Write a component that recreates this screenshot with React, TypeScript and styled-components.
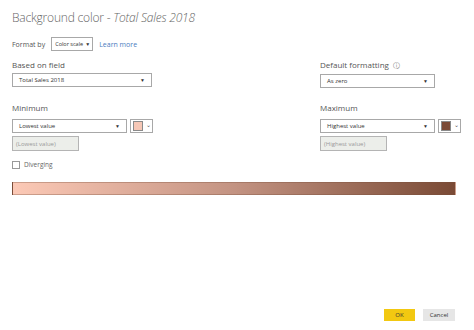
import React from 'react'
import styled, { createGlobalStyle } from 'styled-components';

const GlobalStyle = createGlobalStyle`
    html, body {
        margin: 0;
        padding: 0;
        background: #ffffff;
    }
    body {
        font-family: "Open Sans", "Noto Sans", sans-serif;
        color: #444444;
    }
`;

interface ColorPickProps {
    swatch: string;
};

const ColorPick: React.FC<ColorPickProps> = ({ swatch }) => {
    return (
        <ColorButton>
            <Swatch swatch={swatch} />
            <Caret>⌄</Caret>
        </ColorButton>
    )
};

const Dropdown: React.FC<{ label: string; width: number }> = ({ label, width }) => {
    return (
        <SelectBox style={{ width }}>
            <span>{label}</span>
            <Arrow>▼</Arrow>
        </SelectBox>
    )
};

const App: React.FC = () => {
    return (
        <>
            <GlobalStyle />
            <Dialog>
                <Title>
                    Background color - <em>Total Sales 2018</em>
                </Title>

                <FormatRow>
                    <SmallLabel>Format by</SmallLabel>
                    <FormatSelect>
                        <span>Color scale</span>
                        <Arrow>▼</Arrow>
                    </FormatSelect>
                    <LearnMore>Learn more</LearnMore>
                </FormatRow>

                <Columns top={8}>
                    <Column>
                        <SectionLabel space={2}>Based on field</SectionLabel>
                        <Dropdown label='Total Sales 2018' width={140} />
                    </Column>
                    <Column>
                        <SectionLabel space={2}>
                            Default formatting <Info>ⓘ</Info>
                        </SectionLabel>
                        <Dropdown label='As zero' width={115} />
                    </Column>
                </Columns>

                <Columns top={14}>
                    <Column>
                        <SectionLabel space={5}>Minimum</SectionLabel>
                        <PickRow>
                            <Dropdown label='Lowest value' width={115} />
                            <ColorPick swatch='#f6c7b6' />
                        </PickRow>
                        <ValueInput>(Lowest value)</ValueInput>
                        <CheckRow>
                            <CheckBox />
                            <span>Diverging</span>
                        </CheckRow>
                    </Column>
                    <Column>
                        <SectionLabel space={5}>Maximum</SectionLabel>
                        <PickRow>
                            <Dropdown label='Highest value' width={115} />
                            <ColorPick swatch='#7b4a36' />
                        </PickRow>
                        <ValueInput>(Highest value)</ValueInput>
                    </Column>
                </Columns>

                <GradientBar />

                <Footer>
                    <OkButton>OK</OkButton>
                    <CancelButton>Cancel</CancelButton>
                </Footer>
            </Dialog>
        </>
    )
};

const Dialog = styled.div`
    width: 474px;
    height: 330px;
    box-sizing: border-box;
    padding: 9px 18px 9px 12px;
    display: flex;
    flex-direction: column;
`;

const Title = styled.div`
    font-size: 12px;
    font-weight: 300;
    letter-spacing: -0.2px;
    color: #666666;
    line-height: 18px;
    white-space: nowrap;

    em {
        font-style: italic;
    }
`;

const FormatRow = styled.div`
    margin-top: 10px;
    display: flex;
    align-items: center;
    gap: 6px;
    height: 14px;
`;

const SmallLabel = styled.span`
    font-size: 7px;
    color: #555555;
`;

const Arrow = styled.span`
    font-size: 5px;
    color: #333333;
`;

const FormatSelect = styled.div`
    width: 42px;
    height: 14px;
    box-sizing: border-box;
    border: 1px solid #a8a8a8;
    padding: 0 2px 0 3px;
    display: flex;
    align-items: center;
    justify-content: space-between;
    font-size: 5.5px;
    white-space: nowrap;
    color: #333333;
`;

const LearnMore = styled.span`
    font-size: 7px;
    color: #4a7cc0;
`;

const Columns = styled.div<{ top: number }>`
    display: grid;
    grid-template-columns: 308px 1fr;
    margin-top: ${({ top }) => top}px;
`;

const Column = styled.div`
    display: flex;
    flex-direction: column;
    align-items: flex-start;
`;

const SectionLabel = styled.div<{ space: number }>`
    font-size: 8px;
    color: #555555;
    line-height: 12px;
    margin-bottom: ${({ space }) => space}px;
`;

const Info = styled.span`
    font-size: 7px;
    color: #777777;
    margin-left: 2px;
`;

const SelectBox = styled.div`
    height: 14px;
    box-sizing: border-box;
    border: 1px solid #a8a8a8;
    background: #ffffff;
    padding: 0 6px 0 6px;
    display: flex;
    align-items: center;
    justify-content: space-between;
    font-size: 6px;
    white-space: nowrap;
    color: #333333;
`;

const PickRow = styled.div`
    display: flex;
    gap: 3px;
    align-items: center;
`;

const ColorButton = styled.div`
    width: 23px;
    height: 14px;
    box-sizing: border-box;
    border: 1px solid #a8a8a8;
    display: flex;
    align-items: center;
    gap: 3px;
    padding-left: 2px;
`;

const Swatch = styled.div<{ swatch: string }>`
    width: 10px;
    height: 10px;
    box-sizing: border-box;
    border: 1px solid #8a8a8a;
    background-color: ${({ swatch }) => swatch};
`;

const Caret = styled.span`
    font-size: 6px;
    color: #555555;
    line-height: 6px;
    margin-top: -3px;
`;

const ValueInput = styled.div`
    margin-top: 3px;
    width: 67px;
    height: 15px;
    box-sizing: border-box;
    border: 1px solid #b4b4b4;
    background: #eceeea;
    padding-left: 3px;
    display: flex;
    align-items: center;
    font-size: 6px;
    white-space: nowrap;
    color: #999999;
`;

const CheckRow = styled.div`
    margin-top: 9px;
    display: flex;
    align-items: center;
    gap: 4px;
    font-size: 6.5px;
    color: #666666;
`;

const CheckBox = styled.div`
    width: 6px;
    height: 6px;
    border: 1px solid #999999;
`;

const GradientBar = styled.div`
    margin-top: 13px;
    width: 444px;
    height: 13px;
    box-sizing: border-box;
    border: 1px solid rgba(120, 80, 60, 0.35);
    background: linear-gradient(to right, #fcc9b6, #c39382 50%, #7a4a35);
`;

const Footer = styled.div`
    margin-top: auto;
    display: flex;
    justify-content: flex-end;
    gap: 8px;
    padding-right: 1px;
`;

const OkButton = styled.div`
    width: 31px;
    height: 12px;
    background: #f2c811;
    display: flex;
    align-items: center;
    justify-content: center;
    font-size: 6px;
    color: #333333;
`;

const CancelButton = styled(OkButton)`
    width: 32px;
    background: #e6e6e6;
`;

export default App;
